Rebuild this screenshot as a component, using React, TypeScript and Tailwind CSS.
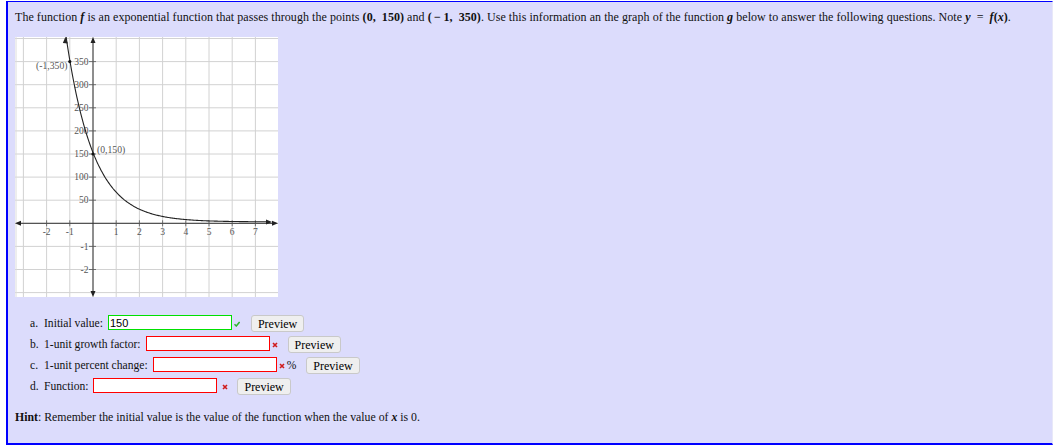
import React from 'react';

const X0 = 78;
const Y0 = 186.3;
const UX = 23.2;
const UY = 23.1 / 50;
const px = (x: number) => X0 + x * UX;
const py = (v: number) => Y0 - v * UY;

const f = (x: number) => 150 * Math.pow(3 / 7, x);

const curvePts: string[] = [];
for (let x = -1.17; x <= 7.5; x += 0.04) {
  curvePts.push(`${px(x).toFixed(2)},${py(f(x) + 3).toFixed(2)}`);
}
const curveD = 'M' + curvePts.join(' L');

const vLines = [-3, -2, -1, 0, 1, 2, 3, 4, 5, 6, 7];
const hLines = [8, 7, 6, 5, 4, 3, 2, 1, 0, -1, -2, -3];
const yLabels = [350, 300, 250, 200, 150, 100, 50];
const xLabels = [-2, -1, 1, 2, 3, 4, 5, 6, 7];

function Graph() {
  const w = 263;
  const h = 260;
  return (
    <svg width={w} height={h} viewBox={`0 0 ${w} ${h}`} className="block bg-white">
      {/* grid */}
      {vLines.map((k) => (
        <line key={'v' + k} x1={px(k)} x2={px(k)} y1={0} y2={h} stroke="#d2d2d2" strokeWidth={1} />
      ))}
      {hLines.map((k) => (
        <line key={'h' + k} x1={0} x2={w} y1={Y0 - k * 23.1} y2={Y0 - k * 23.1} stroke="#d2d2d2" strokeWidth={1} />
      ))}
      <line x1={1} x2={1} y1={0} y2={h} stroke="#dcdcdc" strokeWidth={1} />

      {/* axes */}
      <line x1={2} x2={w - 2} y1={Y0} y2={Y0} stroke="#333" strokeWidth={1} />
      <line x1={X0} x2={X0} y1={2} y2={h - 2} stroke="#333" strokeWidth={1} />
      <polygon points={`0,${Y0} 6,${Y0 - 2.5} 6,${Y0 + 2.5}`} fill="#222" />
      <polygon points={`${w},${Y0} ${w - 6},${Y0 - 2.5} ${w - 6},${Y0 + 2.5}`} fill="#222" />
      <polygon points={`${X0},0 ${X0 - 2.5},6 ${X0 + 2.5},6`} fill="#222" />
      <polygon points={`${X0},${h} ${X0 - 2.5},${h - 6} ${X0 + 2.5},${h - 6}`} fill="#222" />

      {/* ticks */}
      {xLabels.map((k) => (
        <line key={'tx' + k} x1={px(k)} x2={px(k)} y1={Y0 - 3} y2={Y0 + 3} stroke="#555" strokeWidth={0.8} />
      ))}
      {[...yLabels, -50, -100].map((v) => (
        <line key={'ty' + v} x1={X0 - 4} x2={X0 + 3} y1={py(v)} y2={py(v)} stroke="#555" strokeWidth={0.8} />
      ))}

      {/* labels */}
      <g fontFamily="'Liberation Serif', serif" fontSize="9.5" fill="#555">
        {yLabels.map((v) => (
          <text key={'ly' + v} x={73.5} y={py(v) + 3.2} textAnchor="end">
            {v}
          </text>
        ))}
        <text x={73.5} y={py(-50) + 3.2} textAnchor="end">-1</text>
        <text x={73.5} y={py(-100) + 3.2} textAnchor="end">-2</text>
        {xLabels.map((k) => (
          <text key={'lx' + k} x={px(k)} y={Y0 + 12} textAnchor="middle">
            {k}
          </text>
        ))}
        <text x={21} y={31.5} fontSize="9.7">(-1,350)</text>
        <text x={82} y={115.5} fontSize="9.7">(0,150)</text>
      </g>

      {/* curve */}
      <path d={curveD} fill="none" stroke="#222" strokeWidth={1.1} />
      <polygon points={`${px(-1.17) - 0.5},0 ${px(-1.17) - 3},6 ${px(-1.17) + 2},6.5`} fill="#222" />
      <polygon points={`${px(7.5) + 5},${py(3)} ${px(7.5) - 1},${py(3) - 2.5} ${px(7.5) - 1},${py(3) + 2.5}`} fill="#222" />

      {/* points */}
      <circle cx={px(-1)} cy={py(350)} r={1.6} fill="#111" />
      <circle cx={px(0)} cy={py(150)} r={1.6} fill="#111" />
    </svg>
  );
}

function Check() {
  return (
    <svg width="6" height="6" viewBox="0 0 6 6" className="block">
      <path d="M0.5 3.2 L2.3 5 L5.6 1" fill="none" stroke="#2cb52c" strokeWidth="1.5" />
    </svg>
  );
}

function Cross() {
  return (
    <svg width="6" height="6" viewBox="0 0 6 6" className="block">
      <path d="M1 1 L5 5 M5 1 L1 5" fill="none" stroke="#d01c1c" strokeWidth="1.6" />
    </svg>
  );
}

function Field({ value = '', ok = false }: { value?: string; ok?: boolean }) {
  return (
    <input
      readOnly
      value={value}
      className={
        'h-[15px] w-[124px] border bg-white px-[1px] font-["Liberation_Sans",Arial,sans-serif] text-[11px] leading-none text-black outline-none ' +
        (ok ? 'border-[#00e000]' : 'border-[#ff0000]')
      }
    />
  );
}

function PreviewButton({ className = '' }: { className?: string }) {
  return (
    <button
      className={
        'flex h-[17px] items-center rounded-[3px] border border-[#c9c9c9] bg-[#efefef] px-[6px] text-[12px] leading-none text-black ' +
        className
      }
    >
      Preview
    </button>
  );
}

export default function App() {
  return (
    <div className="h-[445px] w-[1053px] overflow-hidden bg-white pl-[6px] pt-[1px]">
      <div className="h-[444px] w-[1047px] border-b-2 border-l-2 border-t border-r border-[#0000ff] border-r-[#e8e8f8] bg-[#dcdcfc] pl-[7px] font-['Liberation_Serif','Times_New_Roman',serif] text-[#111]">
        <p className="pt-[7px] text-[12px] leading-[16px] tracking-[0.05px]">
          The function <i className="font-bold">f</i> is an exponential function that passes through the points{' '}
          <span className="font-bold">(0,&nbsp; 150)</span> and <span className="font-bold">(&thinsp;−&thinsp;1,&nbsp; 350)</span>. Use this
          information an the graph of the function <i className="font-bold">g</i> below to answer the following questions. Note{' '}
          <i className="font-bold">y</i> &nbsp;=&nbsp; <span className="font-bold"><i>f</i>(<i>x</i>)</span>.
        </p>

        <div className="mt-[12px] w-[263px]">
          <Graph />
        </div>

        <div className="mt-[16px] pl-[15px] text-[11.6px] leading-[16px]">
          <div className="flex h-[21px] items-center">
            <span className="w-[14px]">a.</span>
            <span>Initial value:</span>
            <span className="ml-[5px]">
              <Field value="150" ok />
            </span>
            <span className="ml-[2px]">
              <Check />
            </span>
            <PreviewButton className="ml-[11px]" />
          </div>
          <div className="flex h-[21px] items-center">
            <span className="w-[14px]">b.</span>
            <span>1-unit growth factor:</span>
            <span className="ml-[5px]">
              <Field />
            </span>
            <span className="ml-[2px]">
              <Cross />
            </span>
            <PreviewButton className="ml-[10px]" />
          </div>
          <div className="flex h-[21px] items-center">
            <span className="w-[14px]">c.</span>
            <span>1-unit percent change:</span>
            <span className="ml-[5px]">
              <Field />
            </span>
            <span className="ml-[2px]">
              <Cross />
            </span>
            <span className="ml-[2px]">%</span>
            <PreviewButton className="ml-[10px]" />
          </div>
          <div className="flex h-[21px] items-center">
            <span className="w-[14px]">d.</span>
            <span>Function:</span>
            <span className="ml-[5px]">
              <Field />
            </span>
            <span className="ml-[5px]">
              <Cross />
            </span>
            <PreviewButton className="ml-[9px]" />
          </div>
        </div>

        <p className="mt-[12px] text-[11.8px] leading-[16px]">
          <b>Hint</b>: Remember the initial value is the value of the function when the value of{' '}
          <i className="font-bold">x</i> is 0.
        </p>
      </div>
    </div>
  );
}
